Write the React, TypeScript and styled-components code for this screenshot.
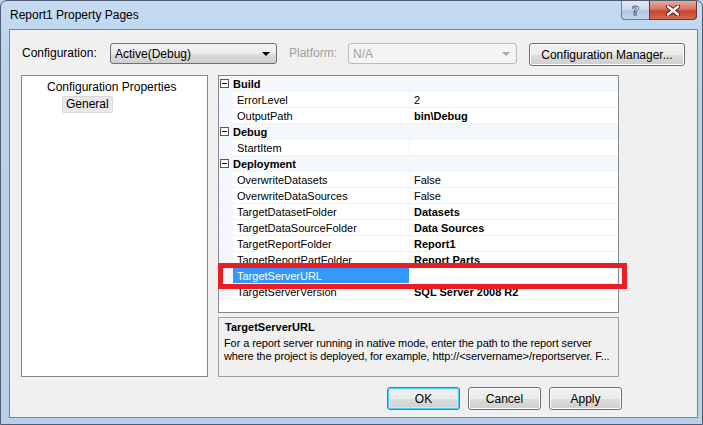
import React from "react";
import styled, { createGlobalStyle } from "styled-components";

const GlobalStyle = createGlobalStyle`
  html, body {
    margin: 0;
    padding: 0;
    background: #b9d1ea;
  }
  * {
    box-sizing: border-box;
  }
`;

type Prop = {
  name: string;
  value?: string;
  bold?: boolean;
  selected?: boolean;
};

type Category = {
  title: string;
  props: Prop[];
};

const categories: Category[] = [
  {
    title: "Build",
    props: [
      { name: "ErrorLevel", value: "2" },
      { name: "OutputPath", value: "bin\\Debug", bold: true },
    ],
  },
  {
    title: "Debug",
    props: [{ name: "StartItem", value: "" }],
  },
  {
    title: "Deployment",
    props: [
      { name: "OverwriteDatasets", value: "False" },
      { name: "OverwriteDataSources", value: "False" },
      { name: "TargetDatasetFolder", value: "Datasets", bold: true },
      { name: "TargetDataSourceFolder", value: "Data Sources", bold: true },
      { name: "TargetReportFolder", value: "Report1", bold: true },
      { name: "TargetReportPartFolder", value: "Report Parts", bold: true },
      { name: "TargetServerURL", value: "", selected: true },
      { name: "TargetServerVersion", value: "SQL Server 2008 R2", bold: true },
    ],
  },
];

const App = () => {
  return (
    <>
      <GlobalStyle />
      <Window>
        <TitleBar>
          <Title>Report1 Property Pages</Title>
          <CaptionButtons>
            <HelpButton>?</HelpButton>
            <CloseButton>
              <svg width="16" height="11" viewBox="0 0 16 11">
                <path
                  d="M3 1.5 L13 9.5 M13 1.5 L3 9.5"
                  stroke="#5b1d14"
                  strokeWidth="4.4"
                  strokeLinecap="round"
                />
                <path
                  d="M3 1.5 L13 9.5 M13 1.5 L3 9.5"
                  stroke="#ffffff"
                  strokeWidth="2.4"
                  strokeLinecap="round"
                />
              </svg>
            </CloseButton>
          </CaptionButtons>
        </TitleBar>

        <Client>
          <TopRow>
            <Label width={88}>Configuration:</Label>
            <Combo width={167}>
              <span>Active(Debug)</span>
              <Arrow />
            </Combo>
            <Label width={59} disabled style={{ marginLeft: 12 }}>
              Platform:
            </Label>
            <Combo width={169} disabled>
              <span>N/A</span>
              <Arrow disabled />
            </Combo>
            <ManagerButton>Configuration Manager...</ManagerButton>
          </TopRow>

          <Main>
            <TreePanel>
              <TreeRoot>Configuration Properties</TreeRoot>
              <TreeItem>General</TreeItem>
            </TreePanel>

            <RightColumn>
              <GridWrap>
                <Grid>
                  {categories.map((cat) => (
                    <React.Fragment key={cat.title}>
                      <CategoryRow>
                        <MarginCell>
                          <Collapse />
                        </MarginCell>
                        <CategoryTitle>{cat.title}</CategoryTitle>
                      </CategoryRow>
                      {cat.props.map((p) => (
                        <PropRow key={p.name}>
                          <MarginCell />
                          <NameCell selected={p.selected}>{p.name}</NameCell>
                          <ValueCell bold={p.bold}>{p.value}</ValueCell>
                        </PropRow>
                      ))}
                    </React.Fragment>
                  ))}
                </Grid>
                <Highlight />
              </GridWrap>

              <Description>
                <DescTitle>TargetServerURL</DescTitle>
                <DescText>
                  For a report server running in native mode, enter the path to the report server
                  <br />
                  where the project is deployed, for example, http://&lt;servername&gt;/reportserver. F...
                </DescText>
              </Description>
            </RightColumn>
          </Main>

          <Footer>
            <DialogButton isDefault>OK</DialogButton>
            <DialogButton>Cancel</DialogButton>
            <DialogButton>Apply</DialogButton>
          </Footer>
        </Client>
      </Window>
    </>
  );
};

export default App;

const uiFont = `"Liberation Sans", Arial, sans-serif`;
const gridFont = `"Liberation Sans", Arial, sans-serif`;

const Window = styled.div`
  width: 703px;
  height: 425px;
  display: flex;
  flex-direction: column;
  background: linear-gradient(180deg, #c6dcf4 0%, #bad3ed 12%, #b6cfea 100%);
  border: 1px solid #4e5d70;
  border-radius: 7px 7px 0 0;
  padding: 0 4px 6px 8px;
  overflow: hidden;
`;

const TitleBar = styled.div`
  height: 28px;
  display: flex;
  align-items: flex-start;
  justify-content: space-between;
`;

const Title = styled.div`
  font-family: ${uiFont};
  font-size: 12px;
  color: #000;
  margin-top: 7px;
  margin-left: 1px;
`;

const CaptionButtons = styled.div`
  display: flex;
  height: 19px;
  margin-right: 1px;
`;

const HelpButton = styled.div`
  width: 28px;
  height: 19px;
  border: 1px solid #6b7c91;
  border-top: none;
  border-right: none;
  border-radius: 0 0 0 4px;
  background: linear-gradient(180deg, #dfe9f5 0%, #cddcee 45%, #b4c8df 55%, #c4d6ea 100%);
  display: flex;
  align-items: center;
  justify-content: center;
  font-family: "DejaVu Sans", sans-serif;
  font-weight: bold;
  font-size: 13px;
  color: #f4f6f9;
  -webkit-text-stroke: 0.8px #4b5866;
`;

const CloseButton = styled.div`
  width: 48px;
  height: 19px;
  border: 1px solid #6e3328;
  border-top: none;
  border-radius: 0 0 4px 0;
  background: linear-gradient(180deg, #e9a99b 0%, #d97864 45%, #c6452c 55%, #d6694e 100%);
  display: flex;
  align-items: center;
  justify-content: center;
`;

const Client = styled.div`
  flex: 1;
  background: #f0f0f0;
  border: 1px solid #75849a;
  padding: 13px 0 0 11px;
  display: flex;
  flex-direction: column;
`;

const TopRow = styled.div`
  display: flex;
  align-items: flex-start;
  height: 22px;
  padding-left: 1px;
`;

const Label = styled.div<{ width: number; disabled?: boolean }>`
  width: ${(p) => p.width}px;
  height: 20px;
  line-height: 20px;
  font-family: ${uiFont};
  font-size: 12px;
  color: ${(p) => (p.disabled ? "#a0a0a0" : "#000")};
`;

const Combo = styled.div<{ width: number; disabled?: boolean }>`
  width: ${(p) => p.width}px;
  height: 21px;
  border: 1px solid ${(p) => (p.disabled ? "#b9bdc1" : "#707070")};
  border-radius: 3px;
  background: ${(p) =>
    p.disabled
      ? "#f4f4f4"
      : "linear-gradient(180deg, #f2f2f2 0%, #ebebeb 50%, #dddddd 51%, #cfcfcf 100%)"};
  display: flex;
  align-items: center;
  justify-content: space-between;
  padding: 0 5px 0 4px;
  font-family: ${uiFont};
  font-size: 12px;
  color: ${(p) => (p.disabled ? "#a0a0a0" : "#000")};
`;

const Arrow = styled.div<{ disabled?: boolean }>`
  width: 0;
  height: 0;
  border-left: 4px solid transparent;
  border-right: 4px solid transparent;
  border-top: 4px solid ${(p) => (p.disabled ? "#a8a8a8" : "#000")};
  margin-right: 1px;
`;

const ButtonBase = styled.div`
  height: 23px;
  border: 1px solid #707070;
  border-radius: 3px;
  background: linear-gradient(180deg, #f2f2f2 0%, #ebebeb 50%, #dddddd 51%, #cfcfcf 100%);
  box-shadow: inset 0 0 0 1px #fcfcfc;
  display: flex;
  align-items: center;
  justify-content: center;
  font-family: ${uiFont};
  font-size: 12px;
  color: #000;
`;

const ManagerButton = styled(ButtonBase)`
  width: 156px;
  margin-left: 12px;
`;

const Main = styled.div`
  display: flex;
  gap: 10px;
  margin-top: 10px;
  height: 302px;
`;

const TreePanel = styled.div`
  width: 187px;
  height: 302px;
  background: #fff;
  border: 1px solid #828790;
  padding: 3px 0 0 25px;
  font-family: ${uiFont};
  font-size: 12px;
  color: #000;
`;

const TreeRoot = styled.div`
  line-height: 16px;
`;

const TreeItem = styled.div`
  display: inline-block;
  margin-left: 15px;
  margin-top: 1px;
  height: 17px;
  line-height: 15px;
  padding: 0 3px;
  background: #e9e9e9;
  border: 1px solid #d9d9d9;
  border-radius: 2px;
`;

const RightColumn = styled.div`
  width: 401px;
  display: flex;
  flex-direction: column;
  gap: 4px;
`;

const GridWrap = styled.div`
  position: relative;
  height: 238px;
`;

const Grid = styled.div`
  height: 100%;
  background: #fff;
  border: 1px solid #828790;
  font-family: ${gridFont};
  font-size: 11px;
  color: #000;
`;

const RowBase = styled.div`
  display: grid;
  grid-template-columns: 14px 177px 1fr;
  height: 16px;
  border-bottom: 1px solid #f0f3f8;
`;

const CategoryRow = styled(RowBase)`
  background: #f4f7fc;
  grid-template-columns: 14px 1fr;
`;

const PropRow = styled(RowBase)``;

const MarginCell = styled.div`
  background: #f4f7fc;
  display: flex;
  align-items: center;
  padding-left: 1px;
`;

const Collapse = styled.div`
  width: 9px;
  height: 9px;
  border: 1px solid #565656;
  background: #fff;
  position: relative;
  &::after {
    content: "";
    position: absolute;
    left: 1px;
    right: 1px;
    top: 3px;
    height: 1px;
    background: #000;
  }
`;

const CategoryTitle = styled.div`
  font-weight: bold;
  padding-top: 2px;
  line-height: 13px;
`;

const NameCell = styled.div<{ selected?: boolean }>`
  padding: 2px 0 0 4px;
  line-height: 13px;
  border-right: 1px solid #f0f3f8;
  background: ${(p) => (p.selected ? "#3399ff" : "transparent")};
  color: ${(p) => (p.selected ? "#fff" : "#000")};
  white-space: nowrap;
  overflow: hidden;
`;

const ValueCell = styled.div<{ bold?: boolean }>`
  padding: 2px 0 0 4px;
  line-height: 13px;
  font-weight: ${(p) => (p.bold ? "bold" : "normal")};
  white-space: nowrap;
`;

const Highlight = styled.div`
  position: absolute;
  left: 0;
  top: 188px;
  width: 409px;
  height: 26px;
  border: 5px solid #ec1c24;
  pointer-events: none;
`;

const Description = styled.div`
  height: 60px;
  border: 1px solid #a0a0a0;
  background: #f0f0f0;
  padding: 2px 0 0 6px;
  font-family: ${gridFont};
  font-size: 11px;
  color: #000;
`;

const DescTitle = styled.div`
  font-weight: bold;
  line-height: 15px;
`;

const DescText = styled.div`
  line-height: 13px;
  margin-top: 2px;
  margin-left: -1px;
  white-space: nowrap;
  letter-spacing: -0.1px;
`;

const Footer = styled.div`
  display: flex;
  justify-content: flex-end;
  gap: 8px;
  margin-top: 10px;
  padding-right: 75px;
`;

const DialogButton = styled(ButtonBase)<{ isDefault?: boolean }>`
  width: 73px;
  border-color: ${(p) => (p.isDefault ? "#3c7fb1" : "#707070")};
  box-shadow: ${(p) =>
    p.isDefault ? "inset 0 0 0 1px #48d7fb, inset 0 0 0 2px #c6ecfa" : "inset 0 0 0 1px #fcfcfc"};
`;
